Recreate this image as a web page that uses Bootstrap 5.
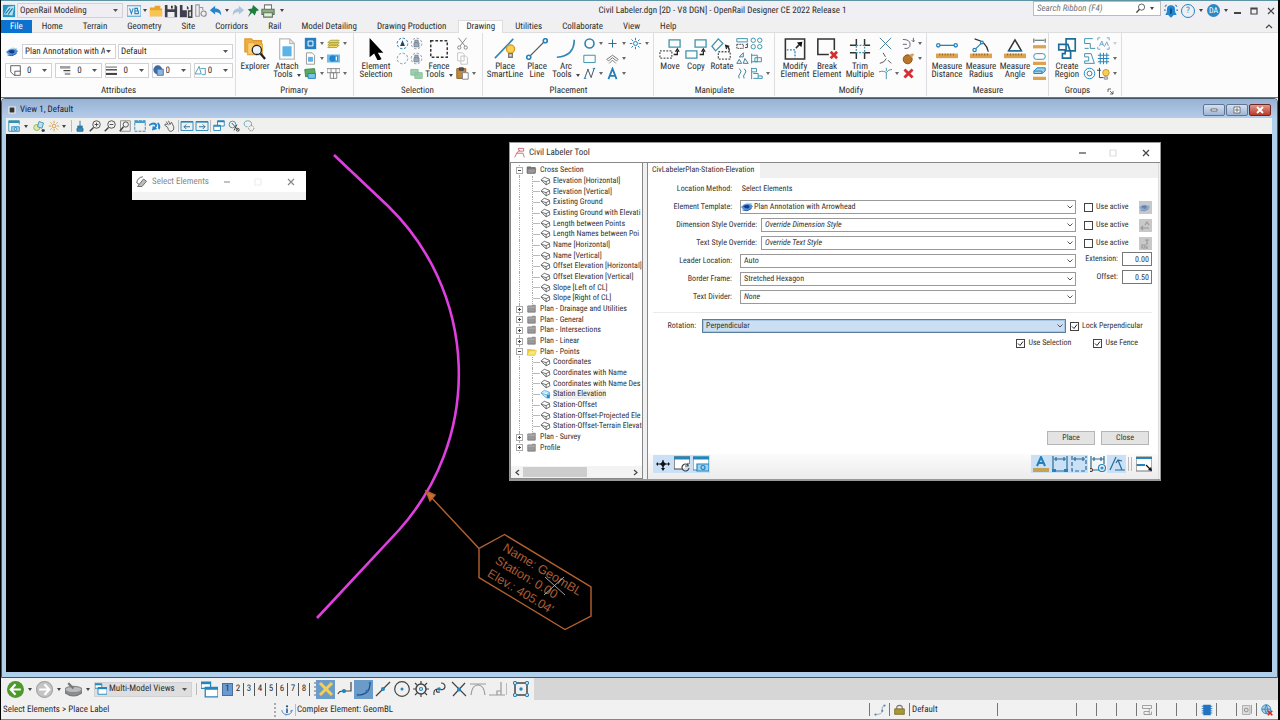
<!DOCTYPE html>
<html lang="en">
<head>
<meta charset="utf-8">
<meta name="viewport" content="width=device-width, initial-scale=1">
<title>Civil Labeler.dgn - OpenRail Designer</title>
<link href="https://cdn.jsdelivr.net/npm/bootstrap@5.3.0/dist/css/bootstrap.min.css" rel="stylesheet">
<style>
:root{--ink:#2e2e2e}
body{font:9px/10px "Roboto Condensed","Open Sans Condensed",Roboto,sans-serif;text-rendering:geometricPrecision;color:var(--ink);background:#f0f0f0;min-height:100vh;border:solid #000;border-width:0 2px 0 1px;box-sizing:border-box;overflow:hidden}
button,select,input{font:inherit;color:inherit;text-rendering:inherit}
button{border:0;background:none;padding:0}
a{color:inherit;text-decoration:none}
svg{display:block;flex:none;overflow:visible}
.ic{width:14px;height:14px;fill:none;stroke:#444;stroke-width:1.2}
.lg{width:22px;height:22px;fill:none;stroke:#333;stroke-width:1.4}
.caret{width:0;height:0;border:2px solid transparent;border-top:3px solid #444;border-bottom:0;flex:none}
.cm1{margin:0 1px}
.pick{appearance:none;border:1px solid #d2d2d6;border-radius:0;background:#fff url("data:image/svg+xml,%3Csvg xmlns='http://www.w3.org/2000/svg' width='5' height='3'%3E%3Cpath d='M0 0h5L2.500 3z' fill='%23555'/%3E%3C/svg%3E") no-repeat right 4px center;height:15px;padding:0 10px 0 2px;min-width:0;outline:0}
.combo{border:1px solid #d2d2d6;height:15px;background:#fff}
.combo .pick{border:0;height:13px}
.titlebar{height:20px;border-top:1px solid #5d93a2;background:#f0eff3}
.titlebar .pick{background-color:#f0edf3;width:106px}
.doc-name{padding-left:128px}
.search{width:128px;height:15px;border:1px solid #bbb;background:#fff}
.search input{border:0;outline:0;width:101px;padding:0 3px;font-style:italic}
.tabs{height:13px;background:#f0f0f0;border-bottom:1px solid #ddd}
.tabs a{padding:2px 10px 0;height:13px;display:block}
.tabs a.file{background:#0b72cf;color:#fff;padding:2px 9px 0}
.tabs a.on{background:#fcfcfd;border:1px solid #ddd;border-bottom:0;padding:1px 7px 0;margin:0 2px}
.ribbon{background:#fcfcfd;height:65px;border-bottom:1px solid #6f7780}
.grp{border-right:1px solid #dedee2;padding:3px 2px 0 3px;height:63px}
.grp .cap{margin-top:auto;text-align:center}
.attrs{width:235px}
.big{display:flex;flex-direction:column;align-items:center;line-height:8px;width:32px;padding-top:2px;white-space:nowrap}
.big .lg{margin-bottom:3px}
.w26{width:26px}.w30{width:30px}.w34{width:34px}.w36{width:36px}.w38{width:38px}
.cells{display:grid;grid-template-rows:repeat(3,15px);align-items:center;justify-items:center}
.cells .ic{width:13px;height:13px}
.cells .caret{opacity:.8}
.c11{grid-template-columns:14px 14px}.c1{grid-template-columns:14px}.c1v{grid-template-columns:14px 9px}.c11v{grid-template-columns:14px 14px 9px}.c2v{grid-template-columns:14px 9px 14px 9px}.c3v{grid-template-columns:14px 9px 14px 9px 14px 9px}
.view{border:1px solid #40576b;border-radius:4px 4px 0 0;background:#b0cfea;padding:0 5px 5px 4px;flex:1 1 auto}
.view-head{height:19px;margin:0 -5px 0 -4px;padding:3px 6px 0 6px;background:linear-gradient(#98b2d3,#b5cbe9);border-radius:3px 3px 0 0;color:#223}
.wbtn{width:22px;height:12px;border:1px solid #5f7592;border-radius:2px;background:linear-gradient(#d3e0f1,#9db6d6);display:grid;place-items:center}
.wbtn.x{background:linear-gradient(#e0998b,#b93a28);border-color:#6e2a22}
.view-tools{height:16px;background:#f0f0ef;padding-left:1px;gap:1px}
.view-tools .ic{width:14px;height:12px}
.sep{width:1px;height:12px;background:#bbb;flex:none}
.canvas{background:#000;position:relative;flex:1 1 auto;min-height:520px}
.scene{position:absolute;left:0;top:0}
.float-bar{position:absolute;left:126px;top:37px;width:174px;height:29px;background:#f3f3f3;color:#888}
.float-bar header{height:21px;background:#fff;padding:0 11px 0 4px}
.dlg{position:absolute;left:503px;top:8px;width:652px;height:339px;background:#fff;border:1px solid #999;border-width:1px 1px 2px;color:#333}
.dlg-head{height:20px;padding:0 10px 0 4px;border-bottom:1px solid #888}
.dlg-body{font-size:8px;background:#f0f0f0;height:316px}
.tree{width:133px;border:1px solid #888;border-top:0;background:#fff;margin-right:4px;overflow:hidden}
.rows{height:290px;padding-top:2px}
.node{flex:1 1 0;min-height:0;display:flex;align-items:center;white-space:nowrap;gap:3px;padding-left:5px;position:relative;line-height:10px}
.node::before{content:"";position:absolute;left:8px;top:0;bottom:0;border-left:1px dotted #aaa}
.node i{width:7px;height:7px;border:1px solid #aaa;background:#fff;position:relative;z-index:1;flex:none}
.node i::before{content:"";position:absolute;left:1px;top:2px;width:3px;height:1px;background:#444}
.node i.plus::after{content:"";position:absolute;left:2px;top:1px;width:1px;height:3px;background:#444}
.leaf{padding-left:29px;gap:2px}
.leaf::after{content:"";position:absolute;left:21px;top:0;bottom:0;width:8px;border-left:1px dotted #aaa;background:linear-gradient(#bbb,#bbb) 0 50%/8px 1px no-repeat}
.node .ic{width:11px;height:10px}
.hbar{height:12px;background:#f3f3f3;padding:0 4px}
.hbar span{width:64px;height:10px;background:#cdcdcd;margin-right:auto;margin-left:3px}
.pane{background:#fff;border:1px solid #888;border-right-color:#ddd;border-width:0 1px;flex:1 1 0;min-width:0;margin-right:1px}
.ptabs{background:#f0f0f0;height:15px}
.ptabs a{background:#fff;display:block;height:15px;padding:2px 4px 0;width:112px;white-space:nowrap}
.form-grid{padding:2px 6px 0 5px}
.form-grid hr{margin:6px 0 3px;color:#aaa}
.line{display:flex;align-items:center;height:18px}
.line>label:first-child,.line>.lab{width:79px;text-align:right;margin-right:8px;flex:none;white-space:nowrap;padding-bottom:1px}
.line.wide>label:first-child{width:104px;margin-right:4px}
.line.rot>label:first-child{width:43px;margin-right:6px}
.dd{appearance:none;flex:1 1 0;min-width:0;height:14px;border:1px solid #999;border-radius:0;padding:0 12px 0 3px;background:#fff url("data:image/svg+xml,%3Csvg xmlns='http://www.w3.org/2000/svg' width='6' height='4'%3E%3Cpath d='M.5 .5L3 3 5.500 .5' fill='none' stroke='%23555'/%3E%3C/svg%3E") no-repeat right 2px center;outline:0}
.dd.it{font-style:italic}
.dd-ic{position:relative;display:flex;flex:1 1 0}
.dd-ic svg{position:absolute;left:1px;top:1px;width:12px;height:12px}.dd-ic .dd{padding-left:13px}
.side{width:76px;padding-left:8px;flex:none;display:flex;align-items:center}
.side .gb{margin-left:auto}
.lockp{width:86px;padding-left:4px}
.tick{appearance:none;width:9px;height:9px;border:1px solid #444;background:#fff;margin:0 3px 0 0;flex:none}
.tick:checked{background:#fff url("data:image/svg+xml,%3Csvg xmlns='http://www.w3.org/2000/svg' viewBox='0 0 7 7'%3E%3Cpath d='M1 3.500L3 5.500 6 1.500' fill='none' stroke='%23222'/%3E%3C/svg%3E") center/7px}
.numf{width:30px;height:14px;border:1px solid #777;text-align:right;padding:0 2px}
.gb{width:13px;height:13px;background:#c8c8c8}
.dd.hot{background-color:#cbdff4;border-color:#5c7f9d;outline:1px solid #a9c6e0;outline-offset:-2px}
.cmds{gap:6px;padding:0 9px 9px 0}
.cmd{width:48px;height:14px;border:1px solid #b5b5b5;background:#e3e3e3}
.dtools{height:25px;padding:0 5px 5px 5px;background:linear-gradient(#fbfbfb,#ececec)}
.dtools button{width:19px;height:18px;display:grid;place-items:center}
.sel{background:#c9e0f6}
.dtools .ic{width:16px;height:16px}
.dtools .rule{border-left:1px solid #bbb;border-right:1px solid #bbb;width:4px;height:14px;margin:0 2px}
.snapbar{height:22px;background:#d6d6d6}
.snapbar>div{background:#f0f0f0;height:22px;padding-left:6px}
.nav-ic{width:17px;height:17px}
.views{width:98px;background:#dedede}
.views .pick{background-color:transparent}
.snap{width:19px;height:19px;display:grid;place-items:center}
.snap .ic{width:16px;height:16px}
.snap.on{background:#6a9bc9}
.vnum{width:11px;height:13px;border-right:1px solid #555;text-align:center}
.vnum.on{background:#6a9bd0;border:1px solid #47709a}
.grip{width:0;height:14px;border-left:2px dotted #aaa}
.status{height:20px;background:#f1f1f1;border-bottom:1px solid #5d93a2;padding:0 2px}
.prompt{width:271px}
.cell{border-left:1px solid #777;height:13px;display:flex;align-items:center;justify-content:center;width:20px;flex:none}
.cell.lv{width:88px;justify-content:flex-start;padding-left:2px}
.cell.wd{width:79px}
.s12{width:12px;height:12px}.s11{width:11px;height:11px}.s10{width:10px;height:10px}.s8{width:8px;height:8px}
</style>
</head>
<body class="d-flex flex-column">

<svg width="0" height="0" class="position-absolute" aria-hidden="true">
 <defs>
 <symbol id="eye" viewBox="0 0 16 16"><path d="M3 5l5-3 7 1-1 4z" fill="#b9d6f2" stroke="none"/><path d="M0 8q4-5 9-4 5 0 7 3-2 4-7 6-5 0-9-5z" fill="#4d8fd8" stroke="none"/><path d="M3 7q4-3 8-1 1 3-2 4-4 0-6-3z" fill="#163a80" stroke="none"/><path d="M2 12q6 3 12-2" stroke="#2456a8"/></symbol>
 <symbol id="logo" viewBox="0 0 16 16"><path d="M1 1h14v14H1z" fill="#2893c5" stroke="none"/><path d="M2 12l5-9 7-1-2 11z" fill="#b4e0f0" stroke="none"/><path d="M4 11l5-6M7 12l5-7" stroke="#1d6f96"/></symbol>
 <symbol id="vb" viewBox="0 0 16 16"><path d="M0 2h16v12H0z" stroke="#48a4d4"/><path d="M3 5l2 6 2-6M9 5v6h4V8H9h3V5z" stroke="#2385bd"/></symbol>
 <symbol id="folder" viewBox="0 0 16 16"><path d="M1 4h5l1-2h6v3h2v9H1z" fill="#e9a52a" stroke="none"/><path d="M1 7h14v6q0 1-1 1H2q-1 0-1-1z" fill="#f8c552" stroke="none"/></symbol>
 <symbol id="floppy" viewBox="0 0 16 16"><path d="M1 1h12l2 2v12H1z" fill="#3f3f4d" stroke="none"/><path d="M4 1h8v5H4zM4 9h8v6H4z" fill="#eee" stroke="none"/><path d="M9 2v3" stroke="#333" stroke-width="2"/></symbol>
 <symbol id="floppy2" viewBox="0 0 16 16"><path d="M1 1h3v6h5V2l2 2v2H9v9H1z" fill="#3f3f4d" stroke="none"/><path d="M14.500 1v14H11V8h3" stroke-width="1.800"/></symbol>
 <symbol id="docs" viewBox="0 0 16 16"><path d="M2 1h4v13H2zM6 4h4v3" stroke="#999"/><circle cx="11" cy="11" r="3" stroke="#888"/></symbol>
 <symbol id="undo" viewBox="0 0 16 16"><path d="M1 7l6-5v3c5 0 7 3 7 8-2-3-4-4-7-4v3z" fill="#2385cd" stroke="none"/></symbol>
 <symbol id="redo" viewBox="0 0 16 16"><path d="M15 7L9 2v3C4 5 2 8 2 13c2-3 4-4 7-4v3z" fill="#a9c6dc" stroke="none"/></symbol>
 <symbol id="pin" viewBox="0 0 16 16"><path d="M8 1l7 6-3 1-2 5-3-3-5 5 3-6-3-3 5-1z" fill="#1f7d3e" stroke="none"/></symbol>
 <symbol id="printer" viewBox="0 0 16 16"><path d="M4 6V1h8v5" fill="#fff" stroke="#777"/><path d="M1 6h14v6H1z" fill="#8fae86" stroke="#5c7358"/><path d="M3 10h10v5H3z" fill="#dff0d6" stroke="#5c7358"/></symbol>
 <symbol id="mag" viewBox="0 0 16 16"><circle cx="9.500" cy="6" r="4.500"/><path d="M6.500 9L2 14" stroke-width="2"/></symbol>
 <symbol id="bell" viewBox="0 0 16 16"><path d="M2 12q2-1 2-6 0-4 4-4t4 4q0 5 2 6zM6 13h4l-2 2z" fill="#2385cd" stroke="#2385cd"/><path d="M1 3l2-2M15 3l-2-2M0 7h2M14 7h2" stroke="#2385cd"/><path d="M8 5v6" stroke="#124"/></symbol>

 <symbol id="explorer" viewBox="0 0 24 24"><path d="M1 1h7l2 2h9v12H1z" fill="#f0b13c" stroke="#e0992a"/><path d="M4 5h7l1 2h8v11H4z" fill="#fbd178" stroke="#e8a840"/><circle cx="14" cy="13" r="5" fill="#e8f2f8" stroke="#222"/><path d="M18 17l5 6" stroke="#222" stroke-width="2.500"/></symbol>
 <symbol id="attach" viewBox="0 0 24 24"><path d="M4 1h11l5 5v17H4z" fill="#fff" stroke="#bbb"/><path d="M15 1v5h5" stroke="#bbb"/><path d="M7 9h10v11H7z" fill="#5cb3e6" stroke="none"/></symbol>
 <symbol id="arrow" viewBox="0 0 24 24"><path d="M5 0v21l5-4 4 8 4-2-4-7h6z" fill="#000" stroke="none"/></symbol>
 <symbol id="fence" viewBox="0 0 24 24"><path d="M3 3h18v18H3z" stroke-dasharray="3 2" stroke-width="1.600"/></symbol>
 <symbol id="smart" viewBox="0 0 24 24"><path d="M1 22L21 1" stroke="#2e86b4" stroke-width="1.800"/><circle cx="18" cy="12" r="4.500" fill="#f8cf52" stroke="#d49a1c"/><path d="M16 17h4v4h-4z" fill="#ddd" stroke="#777"/></symbol>
 <symbol id="pline" viewBox="0 0 24 24"><path d="M4 20L20 4" stroke="#555"/><g fill="#fff" stroke="#2385bd" stroke-width="1.800"><circle cx="3" cy="21" r="2.200"/><circle cx="21" cy="3" r="2.200"/></g></symbol>
 <symbol id="parc" viewBox="0 0 24 24"><path d="M21 2q0 18-19 19" stroke="#2e86b4" stroke-width="1.800"/></symbol>
 <symbol id="move" viewBox="0 0 24 24"><path d="M11 2h12v8H11z" stroke="#3d93ad"/><path d="M1 14h13v8H1z" stroke-dasharray="2 1.500" stroke="#555"/><path d="M16 18h4v-4M18 15l2-3 2 3" stroke="#222"/></symbol>
 <symbol id="copy" viewBox="0 0 24 24"><path d="M11 2h12v8H11zM1 14h12v8H1z" stroke="#3d93ad"/><path d="M16 18h4v-4M18 15l2-3 2 3" stroke="#222"/></symbol>
 <symbol id="rotate" viewBox="0 0 24 24"><path d="M8 1l5 5-8 8-4-5z" stroke="#3d93ad"/><path d="M8 15h13v8H8z" stroke-dasharray="2 1.500" stroke="#555"/><path d="M20 14q0-4-4-6M20 9l-4-1 1 4" stroke="#222"/></symbol>
 <symbol id="modify" viewBox="0 0 24 24"><path d="M1.500 1h21v22h-21z" stroke-width="1.700"/><path d="M3 13h9v9" stroke="#2385bd" stroke-dasharray="2 1.500"/><path d="M13 11l4-4" stroke-width="1.800"/><path d="M20 4l-1 6-5-5z" fill="#111" stroke="none"/></symbol>
 <symbol id="breakel" viewBox="0 0 24 24"><path d="M14 18H2V1h18v12" stroke-width="1.700"/><path d="M16 15l7 7M23 15l-7 7" stroke="#d32f2a" stroke-width="3"/></symbol>
 <symbol id="trim" viewBox="0 0 24 24"><path d="M8 1v7M8 16v7M17 1v7M17 16v7M1 8h7M17 8h6M1 16h7M17 16h6" stroke-width="1.600"/><path d="M8 8h9v8H8z" stroke="#3d93ad" stroke-dasharray="2 1.500"/></symbol>
 <symbol id="ruler" viewBox="0 0 24 24"><path d="M0 17h24v5H0z" fill="#dda24d" stroke="none"/><path d="M4 17v2M7 17v2M10 17v2M13 17v2M16 17v2M19 17v2" stroke="#8a5a1c" stroke-width="1"/></symbol>
 <symbol id="mdist" viewBox="0 0 24 24"><path d="M3 8h18" stroke="#2385bd"/><circle cx="2.500" cy="8" r="1.800" stroke="#2385bd" fill="#fff"/><circle cx="21.500" cy="8" r="1.800" stroke="#2385bd" fill="#fff"/><use href="#ruler"/></symbol>
 <symbol id="mrad" viewBox="0 0 24 24"><path d="M5 1q13 3 15 14"/><path d="M5 13l8-8" stroke="#2385bd"/><circle cx="5" cy="13" r="1.800" stroke="#2385bd" fill="#fff"/><circle cx="13" cy="5" r="1.500" stroke="#2385bd" fill="#fff"/><use href="#ruler"/></symbol>
 <symbol id="mang" viewBox="0 0 24 24"><path d="M12 2L5 14h14z" stroke-width="1.600"/><path d="M5 14h14" stroke="#2385bd"/><use href="#ruler"/></symbol>
 <symbol id="region" viewBox="0 0 24 24"><path d="M11 1h10v13H11zM3 7h10l3 9v6H7v-5h3v-4H3z" stroke="#1c6c98" stroke-width="1.800"/></symbol>

 <symbol id="ref" viewBox="0 0 16 16"><path d="M1 1h14v14H1z" fill="#2480c0" stroke="none"/><path d="M5 5h6v6H5z" stroke="#fff"/></symbol>
 <symbol id="page" viewBox="0 0 16 16"><path d="M3 1h7l3 3v11H3z" fill="#fff" stroke="#999"/><path d="M5 6h6v6H5z" fill="#5cb3e6" stroke="none"/></symbol>
 <symbol id="imgs" viewBox="0 0 16 16"><path d="M1 3l12-1 1 8-12 2z" fill="#5aab5c" stroke="#3a8a4a"/><path d="M5 8h9v6H5z" fill="#7fc4e8" stroke="#2385bd"/></symbol>
 <symbol id="layers" viewBox="0 0 16 16"><path d="M1 13l3-3h11l-3 3zM1 10l3-3h11l-3 3zM1 7l3-3h11l-3 3z" fill="#f0dc62" stroke="#b0a440"/></symbol>
 <symbol id="cloud" viewBox="0 0 16 16"><path d="M0 3h16v10H0z" fill="#70bfe8" stroke="none"/><circle cx="7" cy="8" r="4" fill="#2385cd" stroke="none"/><path d="M10 5h3v6h-3z" fill="#fff" stroke="#2385cd"/></symbol>
 <symbol id="keyin" viewBox="0 0 16 16"><path d="M0 2h16v5H0zM5 2v5M11 2v5M4 7h8v7H4zM8 7v7" stroke="#888"/></symbol>
 <symbol id="circ-d" viewBox="0 0 16 16"><circle cx="8" cy="8" r="6.500" stroke="#6aa5be" stroke-dasharray="3 2"/></symbol>
 <symbol id="circ-a" viewBox="0 0 16 16"><circle cx="8" cy="8" r="6.500" stroke="#2b7a9c" stroke-dasharray="3 2"/><path d="M5 11l3-7 3 7z" fill="#246" stroke="none"/></symbol>
 <symbol id="circ-l" viewBox="0 0 16 16"><circle cx="8" cy="8" r="6.500" stroke="#999" stroke-dasharray="3 2"/><path d="M5 7h6v5H5zM6 7V4h4v3" fill="#9ab" stroke="#789"/></symbol>
 <symbol id="greens" viewBox="0 0 16 16"><path d="M1 3h9v7H1zM6 7h9v7H6z" fill="#9ad0aa" stroke="#8cc09c"/></symbol>
 <symbol id="cut" viewBox="0 0 16 16"><path d="M3 1l8 10M13 1L5 11" stroke="#888"/><circle cx="4" cy="13" r="2" stroke="#888"/><circle cx="12" cy="13" r="2" stroke="#888"/></symbol>
 <symbol id="cp" viewBox="0 0 16 16"><path d="M2 1h6l2 2v8H2zM6 5h6l2 2v8H6z" fill="#fff" stroke="#c4c4c4"/></symbol>
 <symbol id="paste" viewBox="0 0 16 16"><path d="M1 2h11v12H1z" fill="#c08a3e" stroke="#8a6226"/><path d="M4 1h5v3H4z" fill="#555"/><path d="M8 7h7v8H8z" fill="#fff" stroke="#888"/></symbol>
 <symbol id="ring" viewBox="0 0 16 16"><circle cx="8" cy="8" r="5.500" stroke="#2b86b0" stroke-width="2"/></symbol>
 <symbol id="box" viewBox="0 0 16 16"><path d="M1 4h14v9H1z" stroke="#3d93ad"/></symbol>
 <symbol id="zig" viewBox="0 0 16 16"><path d="M2 14L6 3l4 10 4-12" stroke="#456"/><path d="M1 14h3M12 2h3M5 3h2" stroke="#2385bd"/></symbol>
 <symbol id="plus" viewBox="0 0 16 16"><path d="M8 3v10M3 8h10" stroke="#2b6f90"/></symbol>
 <symbol id="chev" viewBox="0 0 16 16"><path d="M1 9l7-5 7 5-2 2-5-4-5 4zM4 14l4-4 4 4" stroke="#777"/></symbol>
 <symbol id="bigA" viewBox="0 0 16 16"><path d="M3 15L8 2l5 13M5 11h6" stroke="#2380b8" stroke-width="2.200"/></symbol>
 <symbol id="sun" viewBox="0 0 16 16"><circle cx="8" cy="8" r="2.500"/><path d="M8 1v3M8 12v3M1 8h3M12 8h3M3 3l2 2M11 11l2 2M13 3l-2 2M5 11l-2 2"/></symbol>
 <symbol id="stretch" viewBox="0 0 16 16"><path d="M1 2h13v4H1z" stroke="#3d93ad"/><path d="M1 9h8v5H1z" stroke-dasharray="2 1"/><path d="M11 13h3V8M12 10l2-2"/></symbol>
 <symbol id="four" viewBox="0 0 16 16"><g stroke="#3d93ad"><circle cx="4" cy="4" r="2.700"/><circle cx="12" cy="4" r="2.700"/><circle cx="4" cy="12" r="2.700"/><circle cx="12" cy="12" r="2.700"/></g></symbol>
 <symbol id="mirror" viewBox="0 0 16 16"><path d="M4 6l5-5v5zM1 14h6L4 9zM9 14h6l-4-6z" stroke="#3d7f9d"/></symbol>
 <symbol id="align" viewBox="0 0 16 16"><path d="M2 2v12M2 4h7v8H2M6 7h8v5H6z" stroke="#3d93ad"/></symbol>
 <symbol id="align2" viewBox="0 0 16 16"><path d="M2 1v14M2 2h6v4H2M4 8h6v6H4M10 11h5v3h-5" stroke="#3d93ad"/></symbol>
 <symbol id="waves" viewBox="0 0 16 16"><path d="M4 2q4 3 1 6t-1 6M10 2q4 3 1 6t-1 6" stroke="#3d7f9d"/></symbol>
 <symbol id="ex" viewBox="0 0 16 16"><path d="M1 1l14 14M15 1L1 15" stroke="#457f96"/></symbol>
 <symbol id="ext" viewBox="0 0 16 16"><path d="M1 14q6-1 8-6M5 1l3 5M11 10l4 4" stroke="#555"/></symbol>
 <symbol id="tee" viewBox="0 0 16 16"><path d="M0 6q6-2 9 1v8M9 7q2-4 7-4M9 1v4" stroke="#4f93a4"/></symbol>
 <symbol id="merge" viewBox="0 0 16 16"><path d="M1 3q9 0 9 6t-7 5M1 9h5M14 1v5M12 4l2 2 2-2" stroke="#667"/></symbol>
 <symbol id="ball" viewBox="0 0 16 16"><circle cx="7" cy="9" r="5.500" fill="#b8752c" stroke="#8e5314"/><path d="M9 4q4-4 6-1l-3 4z" fill="#d6a25c" stroke="none"/></symbol>
 <symbol id="redx" viewBox="0 0 16 16"><path d="M3 3l10 10M13 3L3 13" stroke="#d32f35" stroke-width="3.500"/></symbol>
 <symbol id="mruler" viewBox="0 0 16 16"><path d="M0 10h16v4H0z" fill="#dda24d" stroke="none"/><path d="M1 2v5M15 2v5M2 4h12" stroke="#456"/></symbol>
 <symbol id="mruler2" viewBox="0 0 16 16"><path d="M0 12h16v4H0z" fill="#dda24d" stroke="none"/><rect x="1" y="2" width="14" height="7" rx="3" stroke="#3d93ad"/></symbol>
 <symbol id="mruler3" viewBox="0 0 16 16"><path d="M0 12h16v4H0z" fill="#dda24d" stroke="none"/><path d="M1 5l4-4h10v4l-4 3H1zM1 5h10v3" fill="#9fd0ea" stroke="#2385bd"/></symbol>
 <symbol id="pathA" viewBox="0 0 16 16"><path d="M2 2h10M2 2v6h7v6M9 14h6M2 14h5" stroke="#3d93ad"/></symbol>
 <symbol id="pathB" viewBox="0 0 16 16"><path d="M2 2h8l4 12H2v-3h5V6H2z" stroke="#3d93ad"/></symbol>
 <symbol id="target" viewBox="0 0 16 16"><circle cx="8" cy="8" r="6.500" stroke="#2385bd"/><circle cx="8" cy="8" r="3" stroke="#2385bd"/></symbol>
 <symbol id="brk" viewBox="0 0 16 16"><path d="M4 1H1v3M12 1h3v3M4 15H1v-3M12 15h3v-3M3 11l3-6 2 6M4 9h4M9 12l3-6 2 5" stroke="#78a9c4"/></symbol>
 <symbol id="hash" viewBox="0 0 16 16"><path d="M4 1v14M8 1v14M12 1v14M1 4h14M1 8h14M1 12h14" stroke="#2385bd"/></symbol>
 <symbol id="bulb" viewBox="0 0 16 16"><path d="M3 1v12h5M0 4h5" /><circle cx="11" cy="7" r="4" fill="#f8cf52" stroke="#c79a28"/><path d="M9 12h4v3H9z" fill="#ccc" stroke="#999"/></symbol>

 <symbol id="lvl" viewBox="0 0 16 16"><path d="M1 1h14v14H6l-5-5z"/><path d="M7 15V9h8"/></symbol>
 <symbol id="lines" viewBox="0 0 16 16"><path d="M0 3h15M5 8h10M7 13h8" stroke-width="1.500"/><path d="M0 5h15M5 10h10" stroke="#aaa"/></symbol>
 <symbol id="heavy" viewBox="0 0 16 16"><path d="M0 3h16"/><path d="M0 7h16" stroke-width="2"/><path d="M0 13h16" stroke-width="3"/></symbol>
 <symbol id="trans" viewBox="0 0 16 16"><circle cx="7" cy="7" r="6.500" fill="#3a6cac" stroke="none"/><path d="M6 6h9v9H6z" fill="#8cb6df" stroke="#567"/></symbol>
 <symbol id="prio" viewBox="0 0 16 16"><path d="M0 13L6 2l3 11zM8 5h7v9h-5" stroke="#3690b0"/></symbol>

 <symbol id="winv" viewBox="0 0 16 16"><path d="M6 15H1V1h14v5" stroke="#3690b0"/><path d="M1 2.500h14" stroke="#3690b0" stroke-width="3"/><path d="M5 9h10v6H5z" fill="#bfe0f2" stroke="#2385bd"/><circle cx="10" cy="12" r="2" stroke="#2385bd"/></symbol>
 <symbol id="style" viewBox="0 0 16 16"><circle cx="5" cy="10" r="4" fill="#dce9b0" stroke="#9bb04a"/><path d="M8 2l6 2-2 7-6-2z" fill="#bfe0ef" stroke="#3d93ad"/><path d="M12 13h3v2h-3z" fill="#222"/></symbol>
 <symbol id="broom" viewBox="0 0 16 16"><path d="M8 1v7M5 8h6v2H5zM4 11h8v4H4z" fill="#2d8fc4" stroke="#2b7298"/></symbol>
 <symbol id="zin" viewBox="0 0 16 16"><circle cx="10" cy="6" r="5"/><path d="M6 10l-5 5" stroke-width="2"/><path d="M7.500 6h5M10 3.500v5"/></symbol>
 <symbol id="zout" viewBox="0 0 16 16"><circle cx="10" cy="6" r="5"/><path d="M6 10l-5 5" stroke-width="2"/><path d="M7.500 6h5"/></symbol>
 <symbol id="zwin" viewBox="0 0 16 16"><path d="M2 1h13v14H2z" stroke="#888"/><circle cx="9" cy="6" r="3.500"/><path d="M6 9l-5 6" stroke-width="2"/></symbol>
 <symbol id="fit" viewBox="0 0 16 16"><path d="M1 1h14v14H1z" stroke="#2385bd" stroke-dasharray="4 1.500"/><path d="M1 1h14v3H1z" fill="#3f9fd0" stroke="none"/></symbol>
 <symbol id="rotv" viewBox="0 0 16 16"><path d="M0 6q6-5 10-1 2 3-1 5l2 2-7 2 1-6 2 1q3-2-1-3-3 0-6 2zM12 3q5 4 2 10l-2-2q1-4-1-6z" fill="#2385cd" stroke="none"/></symbol>
 <symbol id="hand" viewBox="0 0 16 16"><path d="M3 2l3 5M6 1l2 5 2-3 3 6q1 5-3 6t-5-5L1 7q0-3 3-1" stroke="#555"/></symbol>
 <symbol id="prev" viewBox="0 0 16 16"><path d="M0 2h16v12H0z" stroke="#2385bd"/><path d="M0 2.500h16" stroke="#2385bd" stroke-width="2"/><path d="M4 9h8M7 6L4 9l3 3" stroke="#1b6a94"/></symbol>
 <symbol id="next" viewBox="0 0 16 16"><path d="M0 2h16v12H0z" stroke="#2385bd"/><path d="M0 2.500h16" stroke="#2385bd" stroke-width="2"/><path d="M4 9h8M9 6l3 3-3 3" stroke="#1b6a94"/></symbol>
 <symbol id="casc" viewBox="0 0 16 16"><path d="M6 1h9v7H6z" stroke="#2385bd" fill="#fff"/><path d="M6 2h9" stroke="#2385bd" stroke-width="2"/><path d="M1 7h9v7H1z" stroke="#2385bd" fill="#fff"/><path d="M1 8h9" stroke="#2385bd" stroke-width="2"/></symbol>
 <symbol id="casc2" viewBox="0 0 16 16"><path d="M0 1h9v6H0z" stroke="#2385bd" fill="#fff"/><path d="M0 2h9" stroke="#2385bd" stroke-width="2"/><path d="M4 6h12v9H4z" stroke="#2385bd" fill="#fff"/><path d="M4 7h12" stroke="#2385bd" stroke-width="2.500"/></symbol>
 <symbol id="clip" viewBox="0 0 16 16"><circle cx="6" cy="6" r="4.500" stroke="#3690b0"/><path d="M5 4l9 10M12 6L8 14"/><circle cx="13" cy="13" r="2"/></symbol>
 <symbol id="clip2" viewBox="0 0 16 16"><path d="M11 8q2-7-5-7-6 1-4 6 2 3 4 2" stroke="#6aa0b8"/><circle cx="11" cy="11" r="3.500" stroke="#888" stroke-dasharray="2 1"/></symbol>

 <symbol id="fold" viewBox="0 0 16 16"><path d="M1 3h6l1 1h6v9H1z" fill="#777" stroke="#666"/><path d="M3 6h12l-2 7H1z" fill="#999" stroke="#777"/></symbol>
 <symbol id="foldc" viewBox="0 0 16 16"><path d="M2 3h6l1-1h5v11H2z" fill="#999" stroke="#777"/><path d="M2 5h12" stroke="#bbb"/></symbol>
 <symbol id="foldy" viewBox="0 0 16 16"><path d="M1 3h6l1 1h6v9H1z" fill="#e8c63a" stroke="none"/><path d="M4 6h12l-3 7H1z" fill="#fae873" stroke="#e0c23c"/></symbol>
 <symbol id="tag" viewBox="0 0 16 16"><path d="M1 6l5-4 8 3 1 6-6 3-7-6zM2 7l7 2 5-3M9 9v5" stroke="#444" fill="#fff"/></symbol>
 <symbol id="tagb" viewBox="0 0 16 16"><path d="M1 6l5-4 8 3 1 6-6 3-7-6zM2 7l7 2 5-3" stroke="#45a5d8" fill="#c9e9f8"/><path d="M10 9h5v6h-5z" fill="#2f8fcb" stroke="none"/></symbol>
 <symbol id="brand" viewBox="0 0 16 16"><path d="M1 15l3-6h9l2 6M4 9q1-3 5-4M6 2h8v4H8z" stroke="#c05565"/></symbol>
 <symbol id="tool" viewBox="0 0 16 16"><path d="M2 14L10 4l4 3-6 7z" fill="#bbb" stroke="#666"/><path d="M9 1q-7 1-8 8l3 2" stroke="#555"/></symbol>
 <symbol id="compass" viewBox="0 0 16 16"><path d="M2 8h12M8 4v9"/><path d="M5 8l3-3 3 3-3 3zM1 8l2-2v4zM15 8l-2-2v4zM8 15l-2-3h4z" fill="#111" stroke="none"/></symbol>
 <symbol id="wrot" viewBox="0 0 16 16"><path d="M9 13H0V1h16v7" fill="#fff"/><path d="M0 2h16" stroke="#2385bd" stroke-width="3"/><path d="M14 9a3.500 3.500 0 1 0 1 3M14 7v3h-3"/></symbol>
 <symbol id="wsel" viewBox="0 0 16 16"><path d="M4 14H0V1h16v7" fill="#fff" stroke="#3690b0"/><path d="M0 2h16" stroke="#2385bd" stroke-width="3"/><path d="M4 8h12v7H4z" fill="#9fd0ef" stroke="#2385bd"/><circle cx="10" cy="11.500" r="2" stroke="#2385bd"/></symbol>
 <symbol id="Aul" viewBox="0 0 16 16"><path d="M4 10L8 1l4 9M5 7h6" stroke="#2380b8" stroke-width="2"/><path d="M0 12h16v4H0z" fill="#c6a254" stroke="none"/></symbol>
 <symbol id="dimA" viewBox="0 0 16 16"><path d="M1 0v15h14V0M2 3h12" stroke="#2a6b93"/><path d="M4 1v4M12 1v4" stroke="#2a6b93"/><path d="M0 13h4v3H0zM12 13h4v3h-4z" fill="#2385bd" stroke="none"/></symbol>
 <symbol id="dimB" viewBox="0 0 16 16"><path d="M1 0v15h14V0" stroke-dasharray="4 2" stroke="#2a6b93"/><path d="M2 3h12M4 1v4M12 1v4" stroke="#2a6b93"/></symbol>
 <symbol id="dimC" viewBox="0 0 16 16"><path d="M1 0v14h8M14 0v8M2 3h12M4 1v4M11 1v4" stroke="#2a6b93"/><circle cx="12" cy="12" r="3.500" stroke="#2385bd"/><circle cx="12" cy="12" r="1" stroke="#2385bd"/><circle cx="1" cy="14" r="1.500" fill="#fff"/></symbol>
 <symbol id="ang" viewBox="0 0 16 16"><path d="M1 14L7 1M6 14h10M13 14L9 4M7 7l2-3 4 1" stroke="#2a6b93"/></symbol>
 <symbol id="wcur" viewBox="0 0 16 16"><path d="M0 1h16v14H0zM0 9h9" stroke="#777" fill="#fff"/><path d="M0 2h16M1 9h8" stroke="#2385bd" stroke-width="2"/><path d="M10 9l5 5" stroke="#111"/><path d="M16 15l-4-1 3-3z" stroke="none" fill="#111"/></symbol>

 <symbol id="back" viewBox="0 0 16 16"><circle cx="8" cy="8" r="8" fill="#4c9a2a" stroke="none"/><path d="M13 8H4M8 3L3.500 8 8 13" stroke="#fff" stroke-width="2"/></symbol>
 <symbol id="fwd" viewBox="0 0 16 16"><circle cx="8" cy="8" r="7.500" fill="#c4c4c4" stroke="#aaa"/><path d="M3 8h9M8 3l4.500 5L8 13" stroke="#fff" stroke-width="2"/></symbol>
 <symbol id="drum" viewBox="0 0 16 16"><path d="M0 8v3q8 6 16 0V8z" fill="#8c9094" stroke="#777"/><ellipse cx="8" cy="8" rx="8" ry="3" fill="#b8bcc0" stroke="#888"/><path d="M3 2l5 5" stroke="#777" stroke-width="2"/></symbol>
 <symbol id="yx" viewBox="0 0 16 16"><path d="M2 2l12 12M14 2L2 14" stroke="#f2cf55" stroke-width="3"/></symbol>
 <symbol id="sn1" viewBox="0 0 16 16"><path d="M1 13q1-3 5-3h8V1"/><circle cx="7" cy="10" r="1.500" fill="#2385bd" stroke="#2385bd"/></symbol>
 <symbol id="sn2" viewBox="0 0 16 16"><path d="M2 14q12 0 12-12" stroke="#234c80"/><circle cx="2" cy="14" r="1.300" fill="#2c6fb5" stroke="none"/><circle cx="14" cy="2" r="1.300" fill="#2c6fb5" stroke="none"/><circle cx="11" cy="10" r="1.500" fill="#2c6fb5" stroke="none"/></symbol>
 <symbol id="sn3" viewBox="0 0 16 16"><path d="M1 15L15 1"/><circle cx="8" cy="8" r="2" fill="#2385bd" stroke="none"/></symbol>
 <symbol id="sn4" viewBox="0 0 16 16"><circle cx="8" cy="8" r="7.300"/><circle cx="8" cy="8" r="1.500" fill="#2385bd" stroke="none"/></symbol>
 <symbol id="sn5" viewBox="0 0 16 16"><circle cx="8" cy="8" r="5" stroke-width="1.500"/><path d="M8 0v3M8 13v3M0 8h3M13 8h3M2 2l2 2M12 12l2 2M14 2l-2 2M4 12l-2 2"/><circle cx="8" cy="8" r="1.500" stroke="#2385bd"/></symbol>
 <symbol id="sn6" viewBox="0 0 16 16"><path d="M2 14q-1-6 4-6 6 2 7-2 0-4-4-4M5 8q-2 4 3 3"/><circle cx="7" cy="8" r="1.800" fill="#2385bd" stroke="none"/></symbol>
 <symbol id="sn7" viewBox="0 0 16 16"><path d="M1 1l14 14M14 2L2 15"/><circle cx="8" cy="8.500" r="2" fill="#2385bd" stroke="none"/></symbol>
 <symbol id="sn8" viewBox="0 0 16 16"><path d="M0 3h16M1 14q1-10 7-10t7 10" stroke="#999"/></symbol>
 <symbol id="sn9" viewBox="0 0 16 16"><path d="M0 14h16M12 1v13M12 10H8v4" stroke="#999"/></symbol>
 <symbol id="sn10" viewBox="0 0 16 16"><path d="M2 2h12v12H2z" stroke-width="1.500"/><g fill="#fff" stroke="#2385bd"><circle cx="2" cy="2" r="1.500"/><circle cx="14" cy="2" r="1.500"/><circle cx="2" cy="14" r="1.500"/><circle cx="14" cy="14" r="1.500"/></g><circle cx="8" cy="8" r="1.700" fill="#2385bd" stroke="none"/></symbol>
 <symbol id="info" viewBox="0 0 16 16"><path d="M1 8q1 6 7 6t7-6l-3 2M8 14l-2 1" stroke="#4a86bf"/><path d="M8 6v6" stroke="#1f4e8c" stroke-width="2"/><circle cx="8" cy="3" r="1.500" fill="#1f4e8c" stroke="none"/></symbol>
 <symbol id="snapm" viewBox="0 0 16 16"><path d="M2 14q9 0 9-5V4l3-2" stroke="#8ab"/><circle cx="2" cy="14" r="1.500" fill="#68a" stroke="none"/><circle cx="14" cy="2" r="1.500" fill="#68a" stroke="none"/><circle cx="11" cy="9" r="1.500" fill="#68a" stroke="none"/></symbol>
 <symbol id="lock" viewBox="0 0 16 16"><path d="M4 8V5q0-3 4-3t4 3v3" stroke="#777" stroke-width="1.500"/><path d="M1 7h14v8H1z" fill="#a8963a" stroke="#7a6a1c"/></symbol>
 <symbol id="scroll" viewBox="0 0 16 16"><path d="M2 2h12v4h-3v8H4v-4h7M2 2v4h9M4 14h10v-4" stroke="#999"/></symbol>
 <symbol id="note" viewBox="0 0 16 16"><path d="M3 1h10v14H3z" fill="#2374c0" stroke="none"/><path d="M1 3h3M1 6h3M1 9h3M1 12h3M12 3h3M12 6h3M12 9h3M12 12h3" stroke="#2374c0"/></symbol>
 <symbol id="gbox" viewBox="0 0 16 16"><path d="M2 2h10v12H2z" fill="#ddd" stroke="#aaa"/><circle cx="7" cy="8" r="2.500" stroke="#888"/><path d="M14 1v12" stroke="#999"/></symbol>
 <symbol id="globex" viewBox="0 0 16 16"><circle cx="7" cy="7" r="6" fill="#a8d1ea" stroke="#3a86ba"/><path d="M1 7h12M7 1q-4 6 0 12 4-6 0-12" stroke="#3a86ba"/><path d="M9 9l6 6M15 9l-6 6" stroke="#d02a22" stroke-width="2.200"/></symbol>
 </defs>
</svg>

<header class="titlebar d-flex align-items-center">
 <svg class="ic cm1"><use href="#logo"/></svg>
 <select class="pick" aria-label="Workflow"><option>OpenRail Modeling</option></select>
 <div class="d-flex align-items-center ms-1" style="gap:1px">
  <button aria-label="Tasks"><svg class="ic"><use href="#vb"/></svg></button><span class="caret cm1"></span>
  <button aria-label="Open"><svg class="ic"><use href="#folder"/></svg></button>
  <button aria-label="Save"><svg class="ic"><use href="#floppy"/></svg></button>
  <button aria-label="Save settings"><svg class="ic"><use href="#floppy2"/></svg></button>
  <button aria-label="Compress"><svg class="ic"><use href="#docs"/></svg></button>
  <button aria-label="Undo"><svg class="ic"><use href="#undo"/></svg></button><span class="caret cm1"></span>
  <button aria-label="Redo"><svg class="ic"><use href="#redo"/></svg></button>
  <button aria-label="Pin"><svg class="ic"><use href="#pin"/></svg></button>
  <button aria-label="Print"><svg class="ic"><use href="#printer"/></svg></button><span class="caret ms-1"></span>
 </div>
 <div class="doc-name flex-grow-1 text-center">Civil Labeler.dgn [2D - V8 DGN] - OpenRail Designer CE 2022 Release 1</div>
 <div class="search d-flex align-items-center mb-1"><input type="text" placeholder="Search Ribbon (F4)" aria-label="Search Ribbon"><svg class="ic s11"><use href="#mag"/></svg><span class="caret ms-1"></span></div>
 <div class="d-flex align-items-center" style="gap:3px;padding:0 2px 0 3px">
  <button aria-label="Notifications"><svg class="ic"><use href="#bell"/></svg></button>
  <button class="rounded-circle" aria-label="Help" style="width:14px;height:14px;border:1px solid #2385bd;color:#2385bd">?</button><span class="caret cm1"></span>
  <button class="rounded-circle text-white" style="width:13px;height:13px;background:#2989c6;font-size:8px">DA</button><span class="caret cm1"></span>
  <button aria-label="Minimize"><svg class="ic s10"><path d="M2 7h7" stroke-width="2"/></svg></button>
  <button aria-label="Maximize" class="ms-1"><svg class="ic s10"><path d="M2 2h6v6H2zM2 3h6"/></svg></button>
  <button aria-label="Close" class="ms-1"><svg class="ic s10"><path d="M2 2l6 6M8 2L2 8"/></svg></button>
 </div>
</header>

<nav class="tabs d-flex">
 <a class="file" href="#">File</a><a href="#">Home</a><a href="#">Terrain</a><a href="#">Geometry</a><a href="#">Site</a><a href="#">Corridors</a><a href="#">Rail</a><a href="#">Model Detailing</a><a href="#">Drawing Production</a><a class="on" href="#">Drawing</a><a href="#">Utilities</a><a href="#">Collaborate</a><a href="#">View</a><a href="#">Help</a>
 <button class="ms-auto me-1" aria-label="Collapse ribbon"><svg class="ic s10"><path d="M2 7l3-3 3 3"/></svg></button>
</nav>

<section class="ribbon d-flex">
 <div class="grp attrs d-flex flex-column">
  <div class="d-flex align-items-center mt-1 pt-1" style="gap:2px;padding-left:2px">
   <svg class="ic s12"><use href="#eye"/></svg><span></span>
   <select class="pick" style="width:94px" aria-label="Template"><option>Plan Annotation with A</option></select>
   <select class="pick flex-grow-1" aria-label="Level"><option>Default</option></select>
  </div>
  <div class="d-flex" style="gap:3px;margin-top:4px;padding-left:1px">
   <div class="combo d-flex align-items-center flex-fill"><svg class="ic ms-1 s11"><use href="#lvl"/></svg><select class="pick flex-grow-1 ms-1" aria-label="Color"><option>0</option></select></div>
   <div class="combo d-flex align-items-center flex-fill"><svg class="ic ms-1 s11"><use href="#lines"/></svg><select class="pick flex-grow-1 ms-1" aria-label="Line style"><option>0</option></select></div>
   <div class="combo d-flex align-items-center flex-fill"><svg class="ic s11"><use href="#heavy"/></svg><select class="pick flex-grow-1 ms-1" aria-label="Weight"><option>0</option></select></div>
   <div class="combo d-flex align-items-center flex-fill"><svg class="ic s11"><use href="#trans"/></svg><select class="pick flex-grow-1" aria-label="Transparency"><option>0</option></select></div>
   <div class="combo d-flex align-items-center flex-fill"><svg class="ic s11"><use href="#prio"/></svg><select class="pick flex-grow-1" aria-label="Priority"><option>0</option></select></div>
  </div>
  <div class="cap">Attributes</div>
 </div>

 <div class="grp d-flex flex-column pe-1">
  <div class="d-flex">
   <button class="big"><svg class="lg"><use href="#explorer"/></svg>Explorer</button>
   <button class="big"><svg class="lg"><use href="#attach"/></svg>Attach<span class="d-flex align-items-center gap-1">Tools<i class="caret"></i></span></button>
   <div class="cells c2v">
    <svg class="ic"><use href="#ref"/></svg><i class="caret"></i><svg class="ic"><use href="#layers"/></svg><i class="caret"></i>
    <svg class="ic"><use href="#page"/></svg><i class="caret"></i><svg class="ic"><use href="#cloud"/></svg><span></span>
    <svg class="ic"><use href="#imgs"/></svg><i class="caret"></i><svg class="ic"><use href="#keyin"/></svg><i class="caret"></i>
   </div>
  </div>
  <div class="cap">Primary</div>
 </div>

 <div class="grp d-flex flex-column pe-1">
  <div class="d-flex">
   <button class="big w38"><svg class="lg"><use href="#arrow"/></svg>Element<span>Selection</span></button>
   <div class="cells c11">
    <svg class="ic"><use href="#circ-a"/></svg><svg class="ic"><use href="#circ-l"/></svg>
    <svg class="ic"><use href="#circ-d"/></svg><svg class="ic"><use href="#circ-l"/></svg>
    <span></span><svg class="ic"><use href="#greens"/></svg>
   </div>
   <button class="big"><svg class="lg"><use href="#fence"/></svg>Fence<span class="d-flex align-items-center gap-1">Tools<i class="caret"></i></span></button>
   <div class="cells c1v">
    <svg class="ic"><use href="#cut"/></svg><span></span><svg class="ic"><use href="#cp"/></svg><span></span><svg class="ic"><use href="#paste"/></svg><i class="caret"></i>
   </div>
  </div>
  <div class="cap">Selection</div>
 </div>

 <div class="grp d-flex flex-column">
  <div class="d-flex">
   <button class="big w38"><svg class="lg"><use href="#smart"/></svg>Place<span>SmartLine</span></button>
   <button class="big w26"><svg class="lg"><use href="#pline"/></svg>Place<span>Line</span></button>
   <button class="big"><svg class="lg"><use href="#parc"/></svg>Arc<span class="d-flex align-items-center gap-1">Tools<i class="caret"></i></span></button>
   <div class="cells c3v">
    <svg class="ic"><use href="#ring"/></svg><i class="caret"></i><svg class="ic"><use href="#plus"/></svg><i class="caret"></i><svg class="ic" style="stroke:#2385bd"><use href="#sun"/></svg><i class="caret"></i>
    <svg class="ic"><use href="#box"/></svg><span></span><svg class="ic"><use href="#chev"/></svg><i class="caret"></i><span></span><span></span>
    <svg class="ic"><use href="#zig"/></svg><i class="caret"></i><svg class="ic"><use href="#bigA"/></svg><i class="caret"></i><span></span><span></span>
   </div>
  </div>
  <div class="cap">Placement</div>
 </div>

 <div class="grp d-flex flex-column">
  <div class="d-flex">
   <button class="big w26"><svg class="lg"><use href="#move"/></svg>Move</button>
   <button class="big w26"><svg class="lg"><use href="#copy"/></svg>Copy</button>
   <button class="big w26"><svg class="lg"><use href="#rotate"/></svg>Rotate</button>
   <div class="cells c11v">
    <svg class="ic"><use href="#stretch"/></svg><svg class="ic"><use href="#four"/></svg><span></span>
    <svg class="ic"><use href="#mirror"/></svg><svg class="ic"><use href="#align"/></svg><span></span>
    <svg class="ic"><use href="#waves"/></svg><svg class="ic"><use href="#align2"/></svg><i class="caret"></i>
   </div>
  </div>
  <div class="cap">Manipulate</div>
 </div>

 <div class="grp d-flex flex-column">
  <div class="d-flex">
   <button class="big w34"><svg class="lg"><use href="#modify"/></svg>Modify<span>Element</span></button>
   <button class="big w30"><svg class="lg"><use href="#breakel"/></svg>Break<span>Element</span></button>
   <button class="big w36"><svg class="lg"><use href="#trim"/></svg>Trim<span>Multiple</span></button>
   <div class="cells c2v">
    <svg class="ic"><use href="#ex"/></svg><span></span><svg class="ic"><use href="#merge"/></svg><i class="caret"></i>
    <svg class="ic"><use href="#ext"/></svg><span></span><svg class="ic"><use href="#ball"/></svg><i class="caret"></i>
    <svg class="ic"><use href="#tee"/></svg><i class="caret"></i><svg class="ic"><use href="#redx"/></svg><span></span>
   </div>
  </div>
  <div class="cap">Modify</div>
 </div>

 <div class="grp d-flex flex-column">
  <div class="d-flex">
   <button class="big w34"><svg class="lg"><use href="#mdist"/></svg>Measure<span>Distance</span></button>
   <button class="big w34"><svg class="lg"><use href="#mrad"/></svg>Measure<span>Radius</span></button>
   <button class="big w34"><svg class="lg"><use href="#mang"/></svg>Measure<span>Angle</span></button>
   <div class="cells c1"><svg class="ic"><use href="#mruler"/></svg><svg class="ic"><use href="#mruler2"/></svg><svg class="ic"><use href="#mruler3"/></svg></div>
  </div>
  <div class="cap">Measure</div>
 </div>

 <div class="grp d-flex flex-column">
  <div class="d-flex">
   <button class="big w30"><svg class="lg"><use href="#region"/></svg>Create<span>Region</span></button>
   <div class="cells c11v">
    <svg class="ic"><use href="#pathA"/></svg><svg class="ic"><use href="#brk"/></svg><i class="caret opacity-25"></i>
    <svg class="ic"><use href="#pathB"/></svg><svg class="ic"><use href="#hash"/></svg><i class="caret"></i>
    <svg class="ic"><use href="#target"/></svg><svg class="ic"><use href="#bulb"/></svg><i class="caret"></i>
   </div>
  </div>
  <div class="cap d-flex"><span class="flex-grow-1 pe-1">Groups</span><svg class="ic me-1 s8"><path d="M1 6V3h3M3 5l3 3M6 5v3H3" stroke-width=".8"/></svg></div>
 </div>
</section>

<main class="view d-flex flex-column">
 <div class="view-head d-flex align-items-center">
  <svg class="ic me-1 s8"><path d="M1 1h6v6H1z" fill="#333" stroke="#eee"/></svg>View 1, Default
  <div class="d-flex ms-auto" style="gap:1px">
   <button class="wbtn" aria-label="Minimize view"><svg class="ic" style="width:8px;height:4px"><path d="M1 1h6v2H1z" fill="#fff" stroke="#555" stroke-width=".8"/></svg></button>
   <button class="wbtn" aria-label="Restore view"><svg class="ic" style="width:8px;height:6px"><path d="M1 0h6v6H1zM3 2h2v2H3z" fill="#fff" stroke="#555" stroke-width=".8"/></svg></button>
   <button class="wbtn x" aria-label="Close view"><svg class="ic" style="width:6px;height:6px"><path d="M0 0l6 6M6 0L0 6" stroke="#fff" stroke-width="1.800"/></svg></button>
  </div>
 </div>
 <div class="view-tools d-flex align-items-center">
  <svg class="ic"><use href="#winv"/></svg><i class="caret" style="margin:0 3px 0 2px"></i><svg class="ic"><use href="#style"/></svg><svg class="ic" style="stroke:#d99a30"><use href="#sun"/></svg><i class="caret ms-0 me-1"></i><span class="sep"></span>
  <svg class="ic"><use href="#broom"/></svg><svg class="ic"><use href="#zin"/></svg><svg class="ic"><use href="#zout"/></svg><svg class="ic"><use href="#zwin"/></svg><svg class="ic"><use href="#fit"/></svg><svg class="ic"><use href="#rotv"/></svg><svg class="ic"><use href="#hand"/></svg><span class="sep"></span>
  <svg class="ic"><use href="#prev"/></svg><svg class="ic"><use href="#next"/></svg><span class="sep"></span><svg class="ic"><use href="#casc"/></svg><svg class="ic"><use href="#clip"/></svg><svg class="ic"><use href="#clip2"/></svg>
 </div>

 <div class="canvas">
  <svg class="scene" width="620" height="520" viewBox="6 134 620 520" fill="none">
   <path d="M334 155L388 206A234 234 0 0 1 399 530L317 618" stroke="#e03fe0" stroke-width="2.600"/>
   <g stroke="#b5622f" stroke-width="1.400"><path d="M504.500 534.500L479 548.500V577.500L565 629.500L591 616V587ZM479 548.500L430 496"/><path d="M426 491l9 4-5 6z" fill="#c8702c"/></g>
   <g transform="translate(502 550) rotate(31)" fill="#a85c34" font-family="Liberation Sans, Arial, sans-serif" font-size="12.500"><text x="0" y="0">Name: GeomBL</text><text x="0" y="15">Station: 0.00</text><text x="0" y="30">Elev.: 405.04'</text></g>
   <path d="M545 577l20 18M564 577l-20 18" stroke="#ccc" stroke-width=".8"/>
  </svg>

  <div class="float-bar"><header class="d-flex align-items-center"><svg class="ic s12 me-1"><use href="#tool"/></svg>Select Elements
   <button class="ms-auto" aria-label="Minimize"><svg class="ic s8" style="stroke:#999"><path d="M1 4h6"/></svg></button><button class="ms-4" aria-label="Maximize"><svg class="ic s8" style="stroke:#eee"><path d="M0 1h6v6H0z"/></svg></button><button class="ms-4" aria-label="Close"><svg class="ic s8" style="stroke:#888"><path d="M1 1l6 6M7 1L1 7"/></svg></button></header></div>

  <div class="dlg">
   <div class="dlg-head d-flex align-items-center"><svg class="ic me-1 s11"><use href="#brand"/></svg><span>Civil Labeler Tool</span>
    <button class="ms-auto" aria-label="Minimize"><svg class="ic s8"><path d="M1 4h7"/></svg></button><button class="ms-4" aria-label="Maximize"><svg class="ic s8" style="stroke:#ddd"><path d="M0 1h6v6H0z"/></svg></button><button class="ms-4" aria-label="Close"><svg class="ic s8"><path d="M1 1l6 6M7 1L1 7"/></svg></button></div>
   <div class="dlg-body d-flex">
    <div class="tree d-flex flex-column">
     <div class="rows d-flex flex-column">
      <div class="node"><i></i><svg class="ic"><use href="#fold"/></svg>Cross Section</div>
      <div class="node leaf"><svg class="ic"><use href="#tag"/></svg>Elevation [Horizontal]</div>
      <div class="node leaf"><svg class="ic"><use href="#tag"/></svg>Elevation [Vertical]</div>
      <div class="node leaf"><svg class="ic"><use href="#tag"/></svg>Existing Ground</div>
      <div class="node leaf"><svg class="ic"><use href="#tag"/></svg>Existing Ground with Elevati</div>
      <div class="node leaf"><svg class="ic"><use href="#tag"/></svg>Length between Points</div>
      <div class="node leaf"><svg class="ic"><use href="#tag"/></svg>Length Names between Poi</div>
      <div class="node leaf"><svg class="ic"><use href="#tag"/></svg>Name [Horizontal]</div>
      <div class="node leaf"><svg class="ic"><use href="#tag"/></svg>Name [Vertical]</div>
      <div class="node leaf"><svg class="ic"><use href="#tag"/></svg>Offset Elevation [Horizontal]</div>
      <div class="node leaf"><svg class="ic"><use href="#tag"/></svg>Offset Elevation [Vertical]</div>
      <div class="node leaf"><svg class="ic"><use href="#tag"/></svg>Slope [Left of CL]</div>
      <div class="node leaf"><svg class="ic"><use href="#tag"/></svg>Slope [Right of CL]</div>
      <div class="node"><i class="plus"></i><svg class="ic"><use href="#foldc"/></svg>Plan - Drainage and Utilities</div>
      <div class="node"><i class="plus"></i><svg class="ic"><use href="#foldc"/></svg>Plan - General</div>
      <div class="node"><i class="plus"></i><svg class="ic"><use href="#foldc"/></svg>Plan - Intersections</div>
      <div class="node"><i class="plus"></i><svg class="ic"><use href="#foldc"/></svg>Plan - Linear</div>
      <div class="node"><i></i><svg class="ic"><use href="#foldy"/></svg>Plan - Points</div>
      <div class="node leaf"><svg class="ic"><use href="#tag"/></svg>Coordinates</div>
      <div class="node leaf"><svg class="ic"><use href="#tag"/></svg>Coordinates with Name</div>
      <div class="node leaf"><svg class="ic"><use href="#tag"/></svg>Coordinates with Name Des</div>
      <div class="node leaf"><svg class="ic"><use href="#tagb"/></svg><span style="background:#f0f0f0">Station Elevation</span></div>
      <div class="node leaf"><svg class="ic"><use href="#tag"/></svg>Station-Offset</div>
      <div class="node leaf"><svg class="ic"><use href="#tag"/></svg>Station-Offset-Projected Ele</div>
      <div class="node leaf"><svg class="ic"><use href="#tag"/></svg>Station-Offset-Terrain Elevat</div>
      <div class="node"><i class="plus"></i><svg class="ic"><use href="#foldc"/></svg>Plan - Survey</div>
      <div class="node"><i class="plus"></i><svg class="ic"><use href="#foldc"/></svg>Profile</div>
     </div>
     <div class="hbar d-flex align-items-center mt-auto"><svg class="ic" style="width:5px;height:7px"><path d="M4 1L1 3.500 4 6"/></svg><span></span><svg class="ic" style="width:5px;height:7px"><path d="M1 1l3 2.500L1 6"/></svg></div>
    </div>

    <div class="pane d-flex flex-column">
     <div class="ptabs"><a href="#">CivLabelerPlan-Station-Elevation</a></div>
     <div class="form-grid">
      <div class="line"><span class="lab">Location Method:</span><span>&nbsp;Select Elements</span></div>
      <div class="line"><label for="f1">Element Template:</label><div class="dd-ic"><svg class="ic"><use href="#eye"/></svg><select id="f1" class="dd"><option>Plan Annotation with Arrowhead</option></select></div><div class="side"><input class="tick" type="checkbox" id="u1"><label for="u1">Use active</label><button class="gb" aria-label="Pick template"><svg class="ic s11" style="opacity:.5"><use href="#eye"/></svg></button></div></div>
      <div class="line wide"><label for="f2">Dimension Style Override:</label><select id="f2" class="dd it"><option>Override Dimension Style</option></select><div class="side"><input class="tick" type="checkbox" id="u2"><label for="u2">Use active</label><button class="gb" aria-label="Dimension styles"><svg class="ic s11" style="stroke:#999"><path d="M2 8h8M4 6L2 8l2 2M6 5l2-3 2 3"/></svg></button></div></div>
      <div class="line wide"><label for="f3">Text Style Override:</label><select id="f3" class="dd it"><option>Override Text Style</option></select><div class="side"><input class="tick" type="checkbox" id="u3"><label for="u3">Use active</label><button class="gb" aria-label="Text styles"><svg class="ic s11" style="stroke:#999"><path d="M6 2h4M8 2v5M3 7h3v3H3zM8 8v3"/></svg></button></div></div>
      <div class="line"><label for="f4">Leader Location:</label><select id="f4" class="dd"><option>Auto</option></select><div class="side pb-1"><label for="n1" class="ms-auto me-1">Extension:</label><input id="n1" class="numf" type="text" value="0.00"></div></div>
      <div class="line"><label for="f5">Border Frame:</label><select id="f5" class="dd"><option>Stretched Hexagon</option></select><div class="side pb-1"><label for="n2" class="ms-auto me-1">Offset:</label><input id="n2" class="numf" type="text" value="0.50"></div></div>
      <div class="line"><label for="f6">Text Divider:</label><select id="f6" class="dd it"><option>None</option></select><div class="side"></div></div>
      <hr>
      <div class="line rot mt-1"><label for="f7">Rotation:</label><select id="f7" class="dd hot"><option>Perpendicular</option></select><div class="lockp d-flex align-items-center"><input class="tick" type="checkbox" checked id="k1"><label for="k1">Lock Perpendicular</label></div></div>
      <div class="d-flex align-items-center justify-content-end" style="height:16px;padding-right:14px"><input class="tick" type="checkbox" checked id="k2"><label for="k2" style="width:65px">Use Selection</label><input class="tick" type="checkbox" checked id="k3"><label for="k3">Use Fence</label></div>
     </div>
     <div class="cmds d-flex justify-content-end mt-auto"><button class="cmd">Place</button><button class="cmd">Close</button></div>
     <div class="dtools d-flex align-items-center">
      <button class="sel" aria-label="Compass"><svg class="ic" style="stroke:#111"><use href="#compass"/></svg></button><button aria-label="Rotate window" class="sel"><svg class="ic"><use href="#wrot"/></svg></button><button class="sel" aria-label="Selection window"><svg class="ic"><use href="#wsel"/></svg></button>
      <button class="ms-auto sel" aria-label="Text"><svg class="ic"><use href="#Aul"/></svg></button><button class="sel" aria-label="Frame"><svg class="ic"><use href="#dimA"/></svg></button><button class="sel" aria-label="Dashed frame"><svg class="ic"><use href="#dimB"/></svg></button><button aria-label="Linked frame"><svg class="ic"><use href="#dimC"/></svg></button><button class="sel" aria-label="Angle"><svg class="ic"><use href="#ang"/></svg></button><span class="rule"></span><button aria-label="Expand"><svg class="ic"><use href="#wcur"/></svg></button>
     </div>
    </div>
   </div>
  </div>
 </div>
</main>

<footer>
 <div class="snapbar d-flex"><div class="d-flex align-items-center">
  <svg class="ic nav-ic"><use href="#back"/></svg><i class="caret mx-1"></i>
  <svg class="ic nav-ic"><use href="#fwd"/></svg><i class="caret mx-1"></i>
  <svg class="ic nav-ic"><use href="#drum"/></svg><i class="caret mx-1"></i>
  <div class="combo views d-flex align-items-center"><svg class="ic s12"><use href="#casc2"/></svg><select class="pick flex-grow-1" aria-label="View group"><option>Multi-Model Views</option></select></div>
  <span class="sep mx-1"></span><svg class="ic nav-ic me-1"><use href="#casc2"/></svg>
  <button class="vnum on">1</button><button class="vnum">2</button><button class="vnum">3</button><button class="vnum">4</button><button class="vnum">5</button><button class="vnum">6</button><button class="vnum">7</button><button class="vnum">8</button>
  <span class="grip ms-1"></span>
  <button class="snap on" aria-label="AccuSnap"><svg class="ic"><use href="#yx"/></svg></button>
  <button class="snap" aria-label="Near"><svg class="ic"><use href="#sn1"/></svg></button><button class="snap on" aria-label="Keypoint"><svg class="ic"><use href="#sn2"/></svg></button><button class="snap" aria-label="Midpoint"><svg class="ic"><use href="#sn3"/></svg></button><button class="snap" aria-label="Center"><svg class="ic"><use href="#sn4"/></svg></button><button class="snap" aria-label="Origin"><svg class="ic"><use href="#sn5"/></svg></button><button class="snap" aria-label="Bisector"><svg class="ic"><use href="#sn6"/></svg></button><button class="snap" aria-label="Intersection"><svg class="ic"><use href="#sn7"/></svg></button><button class="snap" aria-label="Tangent"><svg class="ic"><use href="#sn8"/></svg></button><button class="snap" aria-label="Perpendicular"><svg class="ic"><use href="#sn9"/></svg></button><span class="sep"></span><button class="snap mx-1" aria-label="Multi-snap"><svg class="ic"><use href="#sn10"/></svg></button>
 </div></div>
 <div class="status d-flex align-items-center">
  <span class="prompt">Select Elements &gt; Place Label</span><span class="grip me-1"></span><svg class="ic s12 cm1"><use href="#info"/></svg><span class="sep cm1"></span><span>Complex Element: GeomBL</span>
  <span class="cell ms-auto"><svg class="ic s12"><use href="#snapm"/></svg></span><span class="cell"><svg class="ic s11"><use href="#lock"/></svg></span><span class="cell lv">Default</span><span class="cell wd"></span><span class="cell"></span><span class="cell"></span><span class="cell"></span><span class="cell"><svg class="ic s12"><use href="#scroll"/></svg></span><span class="cell"></span><span class="cell"></span><span class="cell"><svg class="ic s12"><use href="#note"/></svg></span><span class="cell"></span><span class="cell"><svg class="ic s12"><use href="#gbox"/></svg></span><span class="cell"><svg class="ic s12"><use href="#globex"/></svg></span>
 </div>
</footer>
<script src="https://cdn.jsdelivr.net/npm/bootstrap@5.3.0/dist/js/bootstrap.bundle.min.js"></script>
</body>
</html>
